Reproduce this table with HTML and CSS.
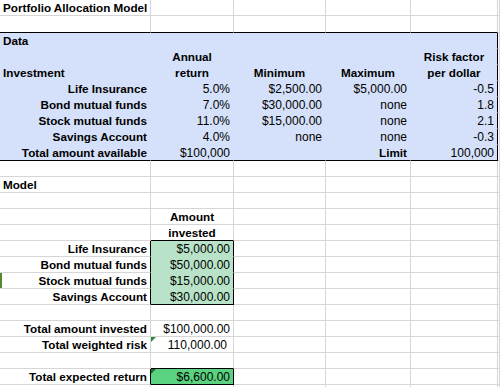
FILE: index.html
```html
<!DOCTYPE html>
<html>
<head>
<meta charset="utf-8">
<title>Portfolio Allocation Model</title>
<link rel="stylesheet" href="styles.css">
</head>
<body>
<div class="sheet">
  <div class="row"><div class="c h tl">Portfolio Allocation Model</div><div class="c"></div><div class="c"></div><div class="c"></div><div class="c"></div><div class="c f"></div></div>
  <div class="row tall"><div class="c bb"></div><div class="c bb"></div><div class="c bb"></div><div class="c bb"></div><div class="c bb"></div><div class="c f"></div></div>

  <div class="row"><div class="c blue h tl">Data</div><div class="c blue"></div><div class="c blue"></div><div class="c blue"></div><div class="c blue br"></div><div class="c f"></div></div>
  <div class="row"><div class="c blue"></div><div class="c blue h tc">Annual</div><div class="c blue"></div><div class="c blue"></div><div class="c blue br h tc">Risk factor</div><div class="c f"></div></div>
  <div class="row"><div class="c blue h tl">Investment</div><div class="c blue h tc">return</div><div class="c blue h tc">Minimum</div><div class="c blue h tc">Maximum</div><div class="c blue br h tc">per dollar</div><div class="c f"></div></div>
  <div class="row"><div class="c blue h">Life Insurance</div><div class="c blue">5.0%</div><div class="c blue">$2,500.00</div><div class="c blue">$5,000.00</div><div class="c blue br">-0.5</div><div class="c f"></div></div>
  <div class="row"><div class="c blue h">Bond mutual funds</div><div class="c blue">7.0%</div><div class="c blue">$30,000.00</div><div class="c blue">none</div><div class="c blue br">1.8</div><div class="c f"></div></div>
  <div class="row"><div class="c blue h">Stock mutual funds</div><div class="c blue">11.0%</div><div class="c blue">$15,000.00</div><div class="c blue">none</div><div class="c blue br">2.1</div><div class="c f"></div></div>
  <div class="row"><div class="c blue h">Savings Account</div><div class="c blue">4.0%</div><div class="c blue">none</div><div class="c blue">none</div><div class="c blue br">-0.3</div><div class="c f"></div></div>
  <div class="row"><div class="c blue bb h">Total amount available</div><div class="c blue bb">$100,000</div><div class="c blue bb"></div><div class="c blue bb h">Limit</div><div class="c blue bb br">100,000</div><div class="c f"></div></div>

  <div class="row"><div class="c"></div><div class="c"></div><div class="c"></div><div class="c"></div><div class="c"></div><div class="c f"></div></div>
  <div class="row"><div class="c h tl">Model</div><div class="c"></div><div class="c"></div><div class="c"></div><div class="c"></div><div class="c f"></div></div>
  <div class="row"><div class="c"></div><div class="c"></div><div class="c"></div><div class="c"></div><div class="c"></div><div class="c f"></div></div>
  <div class="row"><div class="c"></div><div class="c h tc">Amount</div><div class="c"></div><div class="c"></div><div class="c"></div><div class="c f"></div></div>
  <div class="row"><div class="c"></div><div class="c bb h tc">invested</div><div class="c"></div><div class="c"></div><div class="c"></div><div class="c f"></div></div>
  <div class="row"><div class="c br h">Life Insurance</div><div class="c mint br">$5,000.00</div><div class="c"></div><div class="c"></div><div class="c"></div><div class="c f"></div></div>
  <div class="row"><div class="c br h">Bond mutual funds</div><div class="c mint br">$50,000.00</div><div class="c"></div><div class="c"></div><div class="c"></div><div class="c f"></div></div>
  <div class="row"><div class="c br h mark">Stock mutual funds</div><div class="c mint br">$15,000.00</div><div class="c"></div><div class="c"></div><div class="c"></div><div class="c f"></div></div>
  <div class="row"><div class="c br h">Savings Account</div><div class="c mint br bb">$30,000.00</div><div class="c"></div><div class="c"></div><div class="c"></div><div class="c f"></div></div>
  <div class="row"><div class="c"></div><div class="c"></div><div class="c"></div><div class="c"></div><div class="c"></div><div class="c f"></div></div>
  <div class="row"><div class="c h">Total amount invested</div><div class="c">$100,000.00</div><div class="c"></div><div class="c"></div><div class="c"></div><div class="c f"></div></div>
  <div class="row"><div class="c h">Total weighted risk</div><div class="c flag pad">110,000.00</div><div class="c"></div><div class="c"></div><div class="c"></div><div class="c f"></div></div>
  <div class="row"><div class="c"></div><div class="c bb"></div><div class="c"></div><div class="c"></div><div class="c"></div><div class="c f"></div></div>
  <div class="row"><div class="c br h">Total expected return</div><div class="c lime br bb flag dark">$6,600.00</div><div class="c"></div><div class="c"></div><div class="c"></div><div class="c f"></div></div>
  <div class="row"><div class="c"></div><div class="c"></div><div class="c"></div><div class="c"></div><div class="c"></div><div class="c f"></div></div>
</div>
</body>
</html>
```

FILE: styles.css
```css
html, body {
  margin: 0;
  padding: 0;
  background: #ffffff;
  overflow: hidden;
}

body {
  width: 500px;
  height: 387px;
  font-family: "Liberation Sans", Arial, Helvetica, sans-serif;
  color: #000;
}

.sheet {
  display: flex;
  flex-direction: column;
}

.row {
  display: grid;
  grid-template-columns: 151px 83px 92px 85px 87px 2px;
  height: 16px;
}

.row.tall {
  height: 17px;
}

.c {
  box-sizing: border-box;
  height: 100%;
  border-right: 1px solid #d6d6d6;
  border-bottom: 1px solid #d6d6d6;
  padding: 1px 3px 0 3px;
  font-size: 12px;
  line-height: 14px;
  text-align: right;
  white-space: nowrap;
  overflow: hidden;
  position: relative;
}

.c.f {
  padding: 0;
}

.h {
  font-weight: bold;
  font-size: 11.7px;
}

.tl { text-align: left; }
.tc { text-align: center; }

.blue {
  background: #d5e0fa;
  border-right-color: #d5e0fa;
  border-bottom-color: #d5e0fa;
}

.mint {
  background: #b8e3c8;
  border-bottom-color: #b8e3c8;
}

.lime {
  background: #5ad27f;
}

.c.br { border-right-color: #000; }
.c.bb { border-bottom-color: #000; }

.pad { padding-right: 6px; }

.flag::before {
  content: "";
  position: absolute;
  left: 0;
  top: 0;
  width: 0;
  height: 0;
  border-top: 5px solid #2a8a3e;
  border-right: 5px solid transparent;
}

.flag.dark::before {
  border-top-color: #1d6b2f;
}

.mark {
  box-shadow: inset 2px 0 0 #55892c;
}
```
